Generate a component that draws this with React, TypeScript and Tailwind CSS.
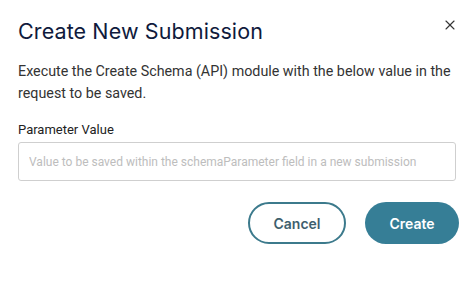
import { X } from 'lucide-react';

export default function App() {
  return (
    <div className="w-[474px] h-[281px] bg-white px-[18px] pt-[14px] font-['Inter',sans-serif]">
      {/* Header */}
      <div className="flex items-start justify-between">
        <h2 className="text-[21.5px] leading-[34px] text-[#0f1a3c] tracking-[0.1px]">Create New Submission</h2>
        <button className="mt-[3px] mr-[-2px] text-[#333]">
          <X className="w-[16px] h-[16px]" strokeWidth={1.6} />
        </button>
      </div>

      <p className="mt-[12px] whitespace-nowrap text-[14.3px] leading-[22px] text-[#333] font-['Roboto',sans-serif]">
        Execute the Create Schema (API) module with the below value in the
        <br />
        request to be saved.
      </p>

      <label className="block mt-[17px] text-[13px] leading-[18px] text-[#222] font-['Roboto',sans-serif]">
        Parameter Value
      </label>
      <input
        className="mt-[3px] w-[438px] h-[39px] rounded-[3px] border border-[#cfcfcf] px-[10px] text-[12px] font-['Roboto',sans-serif] placeholder:text-[#bdbdbd] outline-none"
        placeholder="Value to be saved within the schemaParameter field in a new submission"
      />

      <div className="mt-[21px] flex justify-end gap-[19px] mr-[-3px]">
        <button className="w-[98px] h-[42px] rounded-full border-[2px] border-[#3c7a8c] text-[14px] font-semibold text-[#3e5f6e]">
          Cancel
        </button>
        <button className="w-[94px] h-[42px] rounded-full bg-[#367e96] text-[14px] font-semibold text-white">
          Create
        </button>
      </div>
    </div>
  );
}
